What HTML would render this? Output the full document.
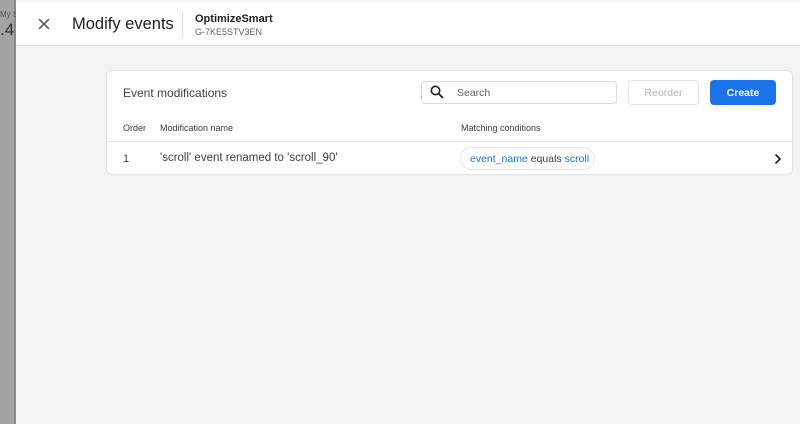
<!DOCTYPE html>
<html><head><style>
*{margin:0;padding:0;box-sizing:border-box}
body{width:800px;height:424px;overflow:hidden;background:#f1f3f4;font-family:"Liberation Sans",Arial,sans-serif;position:relative;color:#202124}
.strip{position:absolute;left:0;top:0;width:15px;height:424px;background:#a3a3a3}
.strip2{position:absolute;left:14px;top:0;width:2px;height:424px;background:#8a8a8a}
.hdr{position:absolute;left:16px;top:2px;right:0;height:44px;background:#fff;border-bottom:1px solid #e3e3e3}
.top{position:absolute;left:16px;top:0;right:0;height:2px;background:#f4f4f4}
.card{position:absolute;left:106px;top:70px;width:687px;height:105px;background:#fff;border:1px solid #e3e3e3;border-radius:6px}
.abs{position:absolute;white-space:nowrap}
</style></head><body>
<div class="strip"></div><div class="strip2"></div>
<div class="abs" style="left:0;top:10px;font-size:8px;color:#555">My S</div>
<div class="abs" style="left:0;top:20px;font-size:17px;color:#333">.4</div>
<div class="top"></div>
<div class="hdr">
 <svg class="abs" style="left:22px;top:16px" width="12" height="12" viewBox="0 0 12 12"><path d="M1 1L11 11M11 1L1 11" stroke="#5f6368" stroke-width="1.6"/></svg>
 <div class="abs" style="left:56px;top:13px;font-size:16.5px;color:#202124">Modify events</div>
 <div class="abs" style="left:166px;top:10px;width:1px;height:26px;background:#e0e0e0"></div>
 <div class="abs" style="left:179px;top:11px;font-size:11px;font-weight:bold;color:#202124">OptimizeSmart</div>
 <div class="abs" style="left:179px;top:25px;font-size:9px;color:#5f6368">G-7KE5STV3EN</div>
</div>
<div class="card">
 <div class="abs" style="left:16px;top:15px;font-size:12px;color:#3c4043">Event modifications</div>
 <div class="abs" style="left:314px;top:10px;width:196px;height:23px;border:1px solid #dadce0;border-radius:4px"></div>
 <svg class="abs" style="left:323px;top:14px" width="14" height="14" viewBox="0 0 14 14"><circle cx="5.5" cy="5.5" r="4.2" fill="none" stroke="#202124" stroke-width="1.6"/><path d="M8.6 8.6L13 13" stroke="#202124" stroke-width="1.8"/></svg>
 <div class="abs" style="left:350px;top:16px;font-size:10.5px;color:#5f6368">Search</div>
 <div class="abs" style="left:521px;top:9px;width:71px;height:25px;border:1px solid #e3e3e3;border-radius:4px;font-size:10.5px;color:#b0b3b8;text-align:center;line-height:25px">Reorder</div>
 <div class="abs" style="left:603px;top:9px;width:66px;height:25px;background:#1a73e8;border-radius:4px;font-size:10.5px;font-weight:bold;color:#fff;text-align:center;line-height:26px">Create</div>
 <div class="abs" style="left:16px;top:52px;font-size:9px;color:#3c4043">Order</div>
 <div class="abs" style="left:53px;top:52px;font-size:9px;color:#3c4043">Modification name</div>
 <div class="abs" style="left:354px;top:52px;font-size:9px;color:#3c4043">Matching conditions</div>
 <div class="abs" style="left:0;top:70px;width:685px;height:1px;background:#e8e8e8"></div>
 <div class="abs" style="left:16px;top:82px;font-size:11px;color:#3c4043">1</div>
 <div class="abs" style="left:53px;top:81px;font-size:11.5px;color:#3c4043">'scroll' event renamed to 'scroll_90'</div>
 <div class="abs" style="left:353px;top:76px;width:135px;height:23px;border:1px solid #e3e3e3;border-radius:12px"></div>
 <div class="abs" style="left:363px;top:82px;font-size:10.5px;color:#3c4043"><span style="color:#1a73e8">event_name</span> equals <span style="color:#1a73e8">scroll</span></div>
 <svg class="abs" style="left:667px;top:82px" width="8" height="12" viewBox="0 0 8 12"><path d="M1.5 1.5L6 6L1.5 10.5" fill="none" stroke="#202124" stroke-width="1.7"/></svg>
</div>
</body></html>
